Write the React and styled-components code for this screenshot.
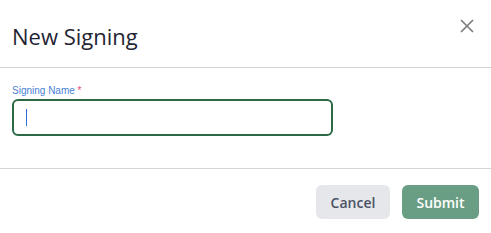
import React from "react";
import styled, { createGlobalStyle } from "styled-components";

const GlobalStyle = createGlobalStyle`
    html, body {
        margin: 0;
        padding: 0;
        background: #ffffff;
    }
    body {
        font-family: "Open Sans", "Noto Sans", sans-serif;
    }
`;

const Modal = styled.div`
    width: 491px;
    height: 233px;
    background: #ffffff;
    display: flex;
    flex-direction: column;
`;

const Header = styled.div`
    height: 67px;
    display: flex;
    align-items: flex-start;
    justify-content: space-between;
    padding: 0 17px 0 12px;
    border-bottom: 1px solid #d4d6dc;
`;

const Title = styled.h2`
    margin: 21px 0 0 0;
    font-size: 22px;
    font-weight: 400;
    color: #1f2433;
    line-height: 30px;
`;

const CloseButton = styled.button`
    border: 0;
    background: transparent;
    padding: 0;
    margin-top: 18px;
    width: 15px;
    height: 15px;
    display: flex;
    align-items: center;
    justify-content: center;
    cursor: pointer;
`;

const Body = styled.div`
    height: 101px;
    padding: 17px 12px 0 12px;
    box-sizing: border-box;
    border-bottom: 1px solid #d4d6dc;
`;

const Label = styled.label`
    display: block;
    font-family: "Liberation Sans", Arial, sans-serif;
    font-size: 10px;
    color: #4a7fd4;
    line-height: 12px;
    margin-bottom: 2px;
`;

const Required = styled.span`
    color: #e8487e;
`;

const Input = styled.div`
    width: 321px;
    height: 37px;
    box-sizing: border-box;
    border: 2px solid #2b6a47;
    border-radius: 6px;
    display: flex;
    align-items: center;
    padding-left: 12px;
`;

const Caret = styled.span`
    width: 1px;
    height: 17px;
    background: #2f6fd6;
`;

const Footer = styled.div`
    flex: 1;
    display: flex;
    justify-content: flex-end;
    align-items: flex-start;
    gap: 12px;
    padding: 16px 12px 0 0;
`;

const Button = styled.button`
    height: 34px;
    border: 0;
    border-radius: 6px;
    padding: 0;
    width: ${p => p.$width}px;
    font-family: "Open Sans", "Noto Sans", sans-serif;
    font-size: 14px;
    font-weight: 600;
    background: ${p => (p.$primary ? "#6a9e84" : "#e5e7eb")};
    color: ${p => (p.$primary ? "#ffffff" : "#4a5263")};
`;

export default function App() {
    return (
        <Modal>
            <GlobalStyle />
            <Header>
                <Title>New Signing</Title>
                <CloseButton aria-label="Close">
                    <svg width="14" height="14" viewBox="0 0 14 14">
                        <path d="M1 1L13 13M13 1L1 13" stroke="#7a7a7a" strokeWidth="1.6" />
                    </svg>
                </CloseButton>
            </Header>
            <Body>
                <Label>
                    Signing Name <Required>*</Required>
                </Label>
                <Input>
                    <Caret />
                </Input>
            </Body>
            <Footer>
                <Button $width={74}>Cancel</Button>
                <Button $primary $width={77}>Submit</Button>
            </Footer>
        </Modal>
    );
}
